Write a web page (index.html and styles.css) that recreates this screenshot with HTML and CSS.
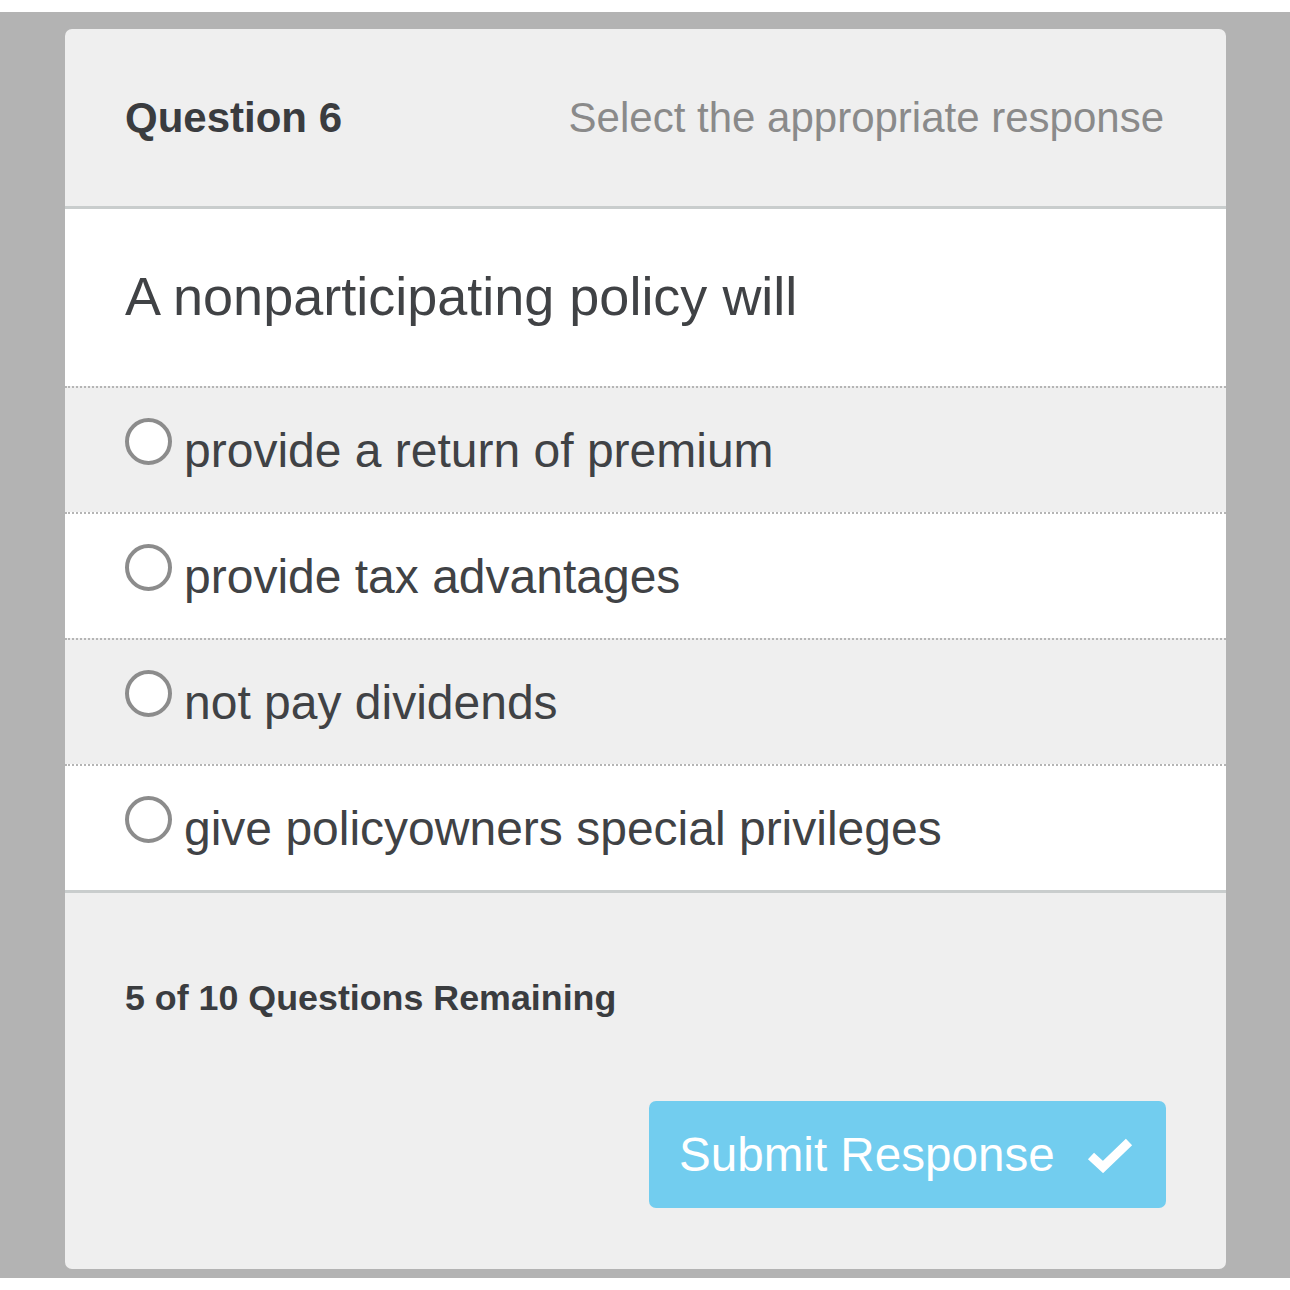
FILE: index.html
```html
<!DOCTYPE html>
<html lang="en">
<head>
    <meta charset="UTF-8">
    <meta name="viewport" content="width=device-width, initial-scale=1.0">
    <title>Question 6</title>
    <link rel="stylesheet" href="styles.css">
</head>
<body>
    <div class="page">
        <div class="quiz-card">
            <div class="quiz-header">
                <span class="quiz-number">Question 6</span>
                <span class="quiz-hint">Select the appropriate response</span>
            </div>

            <div class="quiz-question">A nonparticipating policy will</div>

            <div class="quiz-options">
                <label class="option">
                    <span class="radio"></span>
                    <span class="option-text">provide a return of premium</span>
                </label>
                <label class="option">
                    <span class="radio"></span>
                    <span class="option-text">provide tax advantages</span>
                </label>
                <label class="option">
                    <span class="radio"></span>
                    <span class="option-text">not pay dividends</span>
                </label>
                <label class="option">
                    <span class="radio"></span>
                    <span class="option-text">give policyowners special privileges</span>
                </label>
            </div>

            <div class="quiz-footer">
                <div class="remaining">5 of 10 Questions Remaining</div>
                <div class="footer-actions">
                    <button class="submit-btn">
                        <span>Submit Response</span>
                        <svg class="check" width="46" height="36" viewBox="0 0 46 36">
                            <polyline points="4,19 16,30 42,5" fill="none" stroke="#fff" stroke-width="9" stroke-linejoin="miter"/>
                        </svg>
                    </button>
                </div>
            </div>
        </div>
    </div>
</body>
</html>
```

FILE: styles.css
```css
body {
    margin: 0;
    background-color: #fff;
    font-family: "Liberation Sans", Arial, Helvetica, sans-serif;
    color: #3d3f42;
}

.page {
    margin-top: 12px;
    background-color: #b3b3b3;
    padding: 17px 64px 9px 65px;
}

.quiz-card {
    background-color: #efefef;
    border-radius: 7px;
    overflow: hidden;
}

/* header row */
.quiz-header {
    height: 177px;
    display: flex;
    align-items: center;
    justify-content: space-between;
    padding: 0 62px 0 60px;
    border-bottom: 3px solid #c9cdcd;
}

.quiz-number {
    font-size: 42px;
    font-weight: bold;
    color: #3a3c3f;
}

.quiz-hint {
    font-size: 42px;
    color: #8a8a8a;
}

.quiz-question {
    height: 177px;
    display: flex;
    align-items: center;
    padding: 0 60px 4px 60px;
    box-sizing: border-box;
    background-color: #fff;
    font-size: 54px;
    color: #404245;
}

/* answers */
.option {
    display: flex;
    align-items: flex-start;
    height: 124px;
    box-sizing: content-box;
    padding: 0 60px;
    border-top: 2px dotted #b5b5b5;
}

.option:nth-child(odd) {
    background-color: #efefef;
}

.option:nth-child(even) {
    background-color: #fff;
}

.option:last-child {
    border-bottom: 3px solid #c9cdcd;
}

.radio {
    width: 39px;
    height: 39px;
    margin-top: 30px;
    border: 4px solid #8c8c8c;
    border-radius: 50%;
    background-color: #fff;
    flex-shrink: 0;
}

.option-text {
    margin-top: 34px;
    margin-left: 12px;
    font-size: 48px;
    line-height: 1.2;
    color: #404245;
}

/* footer */
.quiz-footer {
    padding: 85px 60px 61px 60px;
}

.remaining {
    font-size: 35.8px;
    font-weight: bold;
    color: #3a3c3f;
}

.footer-actions {
    display: flex;
    justify-content: flex-end;
    margin-top: 82px;
}

.submit-btn {
    width: 517px;
    height: 107px;
    display: flex;
    align-items: center;
    padding: 0 33px 0 30px;
    border: none;
    border-radius: 7px;
    background-color: #72cdef;
    color: #fff;
    font-family: inherit;
    font-size: 47.6px;
    cursor: pointer;
}

.check {
    margin-left: auto;
}
```
